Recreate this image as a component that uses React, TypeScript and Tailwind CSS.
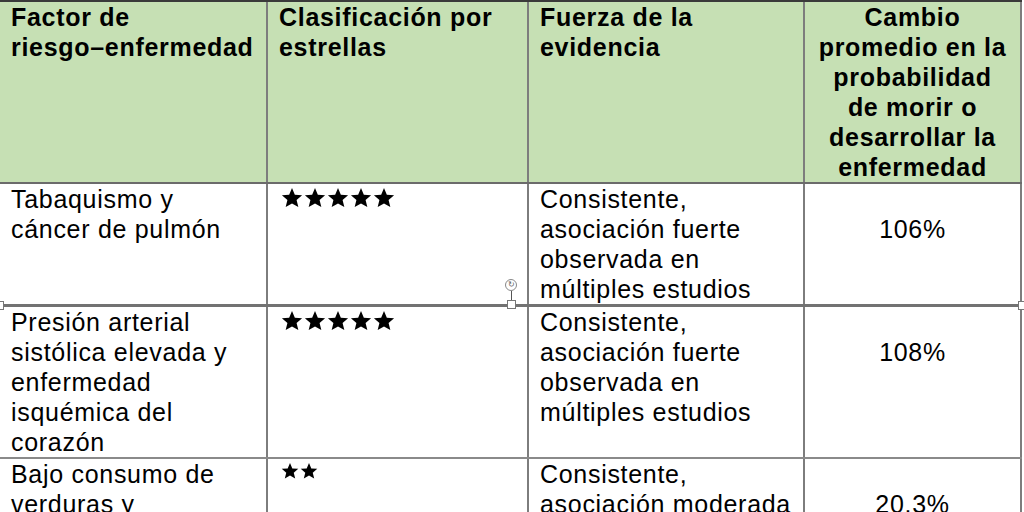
import React from 'react'

const Star = ({ size }: { size: number }) => (
  <svg width={size} height={size} viewBox="0 0 24 24" className="shrink-0">
    <path d="M12 1.2l3.1 7.3 7.9.6-6 5.1 1.9 7.7L12 17.9l-6.9 4 1.9-7.7-6-5.1 7.9-.6z" fill="#000" />
  </svg>
)

const Stars = ({ count, size }: { count: number; size: number }) => (
  <div className="flex gap-px">
    {Array.from({ length: count }).map((_, i) => (
      <Star key={i} size={size} />
    ))}
  </div>
)

const Lines = ({ lines }: { lines: string[] }) => (
  <>
    {lines.map((l, i) => (
      <div key={i} className="whitespace-nowrap">
        {l}
      </div>
    ))}
  </>
)

const rows = [
  {
    factor: ['Tabaquismo y', 'cáncer de pulmón'],
    stars: 5,
    evidence: ['Consistente,', 'asociación fuerte', 'observada en', 'múltiples estudios'],
    change: '106%',
  },
  {
    factor: ['Presión arterial', 'sistólica elevada y', 'enfermedad', 'isquémica del', 'corazón'],
    stars: 5,
    evidence: ['Consistente,', 'asociación fuerte', 'observada en', 'múltiples estudios'],
    change: '108%',
  },
  {
    factor: ['Bajo consumo de', 'verduras y', 'enfermedad'],
    stars: 2,
    evidence: ['Consistente,', 'asociación moderada', 'observada en'],
    change: '20.3%',
  },
]

export default function App() {
  const cell = 'border-r-2 border-[#7d7d7d] pl-[11px]'
  return (
    <div className="relative w-[1024px] h-[512px] overflow-hidden bg-white text-black font-['Liberation_Sans',Arial,sans-serif]">
      <div className="w-[1022px] border-t-2 border-[#3a3a3a] text-[25px] leading-[30px] tracking-[0.7px]">
        {/* Header */}
        <div className="grid grid-cols-[268px_261px_276px_217px] bg-[#c6e0b4] font-bold border-b-2 border-[#6b6b6b]">
          <div className={cell}>
            <Lines lines={['Factor de', 'riesgo–enfermedad']} />
          </div>
          <div className={cell}>
            <Lines lines={['Clasificación por', 'estrellas']} />
          </div>
          <div className={cell}>
            <Lines lines={['Fuerza de la', 'evidencia']} />
          </div>
          <div className="border-r-2 border-[#7d7d7d] text-center">
            <Lines
              lines={[
                'Cambio',
                'promedio en la',
                'probabilidad',
                'de morir o',
                'desarrollar la',
                'enfermedad',
              ]}
            />
          </div>
        </div>

        {/* Body */}
        {rows.map((r, i) => (
          <div
            key={i}
            className={`grid grid-cols-[268px_261px_276px_217px] ${
              i === 0 ? 'border-b-[3px] border-[#727272]' : 'border-b-2 border-[#8a8a8a]'
            }`}
          >
            <div className={cell}>
              <Lines lines={r.factor} />
            </div>
            <div className={`${cell} pl-[13px] pt-[3px]`}>
              {r.stars === 5 ? <Stars count={5} size={22} /> : <Stars count={2} size={18} />}
            </div>
            <div className={cell}>
              <Lines lines={r.evidence} />
            </div>
            <div className="border-r-2 border-[#7d7d7d] text-center pt-[30px]">{r.change}</div>
          </div>
        ))}
      </div>

      {/* selection handles */}
      <div className="absolute left-[505px] top-[279px] flex flex-col items-center">
        <div className="w-[12px] h-[12px] rounded-full border border-[#888] bg-white flex items-center justify-center text-[8px] leading-none text-[#666]">
          ↻
        </div>
        <div className="w-px h-[9px] bg-[#555]" />
        <div className="w-[9px] h-[9px] border border-[#777] bg-white" />
      </div>
      <div className="absolute left-[1018px] top-[301px] w-[8px] h-[9px] border border-[#777] bg-white" />
      <div className="absolute left-[-4px] top-[301px] w-[8px] h-[9px] border border-[#777] bg-white" />
    </div>
  )
}
